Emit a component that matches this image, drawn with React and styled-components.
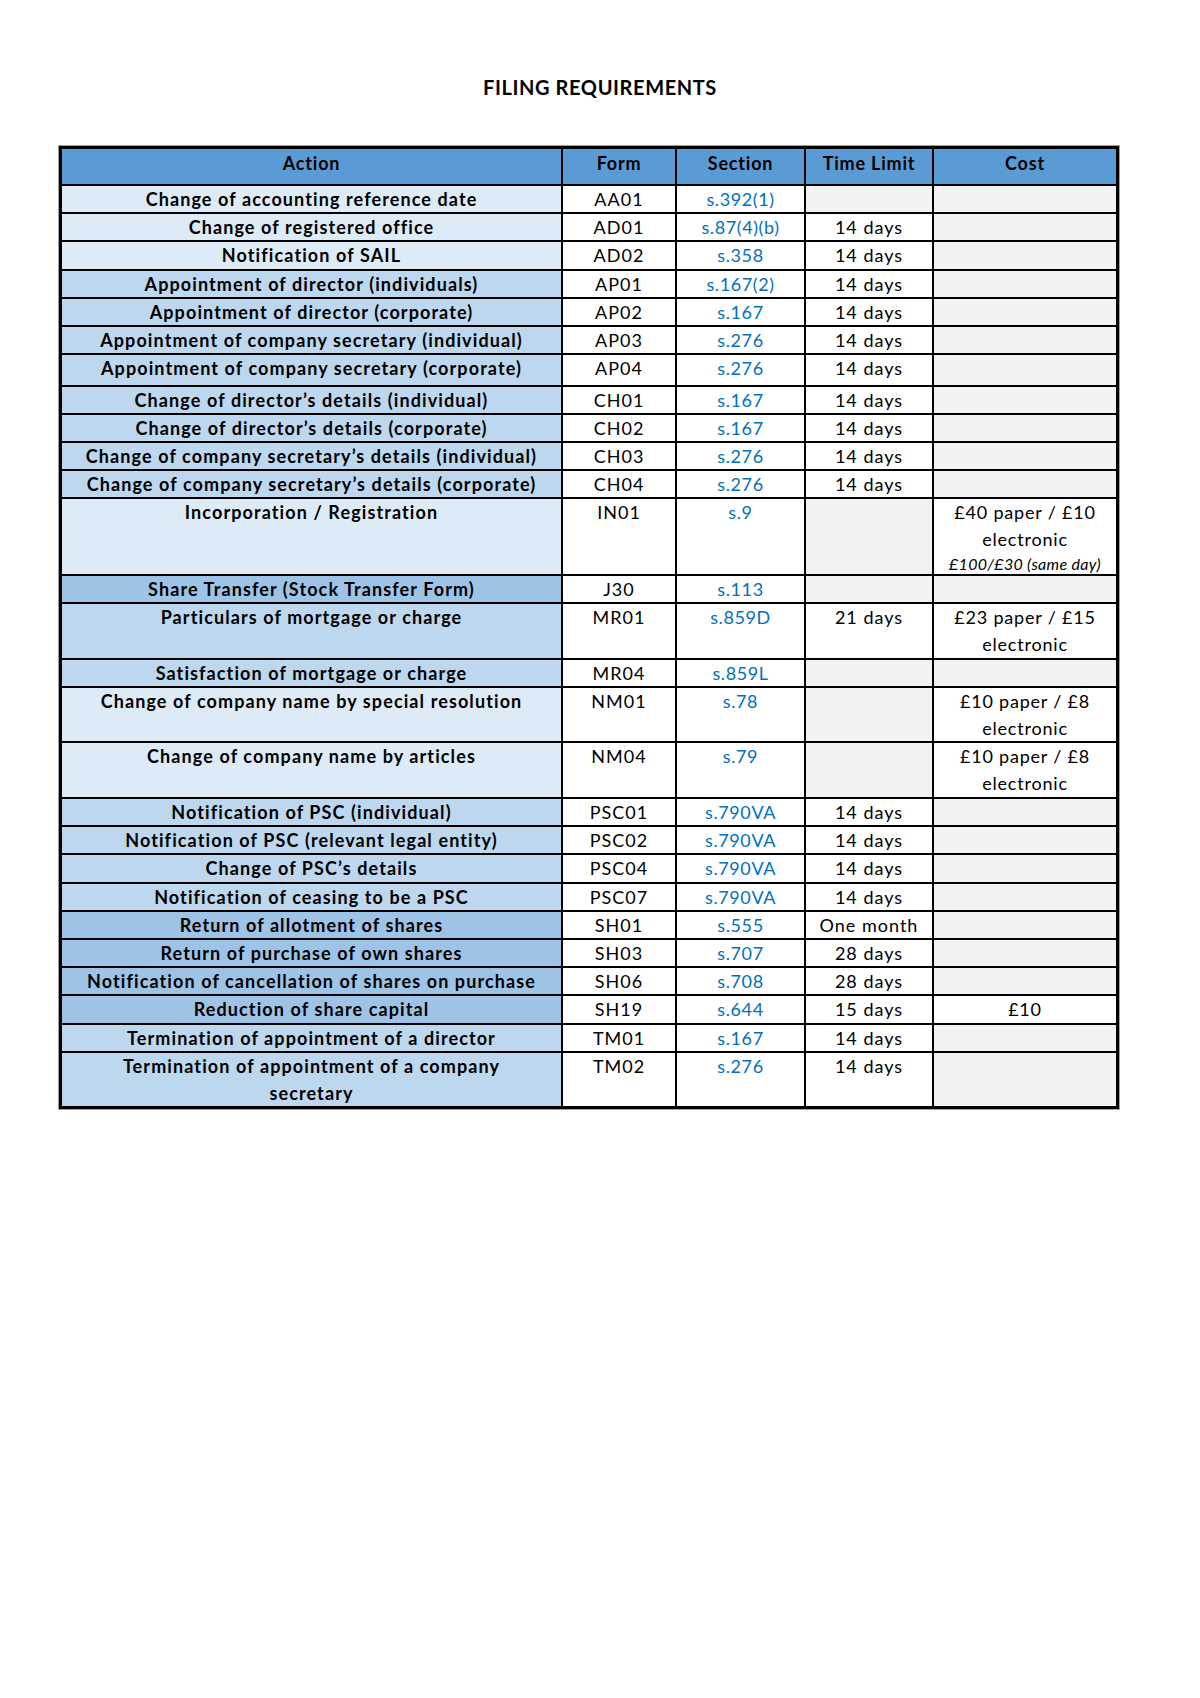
import React from "react";
import styled, { createGlobalStyle } from "styled-components";

const Global = createGlobalStyle`
  html, body {
    margin: 0;
    padding: 0;
    background: #ffffff;
  }
  body {
    font-family: Lato, "Open Sans", sans-serif;
    color: #000;
  }
`;

const Page = styled.div`
  width: 1200px;
  min-height: 1698px;
  padding-top: 75px;
  box-sizing: border-box;
`;

const Title = styled.h1`
  margin: 0 0 47px 0;
  text-align: center;
  font-size: 20px;
  line-height: 24px;
  font-weight: 700;
  letter-spacing: 0.6px;
`;

const Table = styled.div`
  margin-left: 59px;
  width: 1060px;
  box-sizing: border-box;
  display: flex;
  flex-direction: column;
  gap: 2px;
  padding: 3px;
  background: #000;
  outline: 1px solid #a0a0a0;
`;

const Row = styled.div`
  display: grid;
  grid-template-columns: 499px 112px 127px 126px 182px;
  gap: 2px;
  height: ${(p) => p.$h}px;
`;

const Cell = styled.div`
  background: ${(p) => p.$bg || "#ffffff"};
  text-align: center;
  font-size: 18px;
  line-height: 27px;
  font-weight: ${(p) => (p.$bold ? 700 : 400)};
  color: ${(p) => p.$color || "#000"};
  letter-spacing: ${(p) => p.$ls || "1px"};
  overflow: hidden;
  white-space: nowrap;
`;

const HeadCell = styled(Cell)`
  background: #5b9bd5;
  font-weight: 700;
  padding-top: 1px;
  letter-spacing: 0.8px;
`;

const Small = styled.span`
  display: block;
  font-size: 16px;
  line-height: 22px;
  font-style: italic;
  letter-spacing: 0.3px;
`;

const tones = {
  light: "#ddebf7",
  mid: "#bdd7ee",
  dark: "#9dc3e6",
};

const rows = [
  ["Change of accounting reference date", "AA01", "s.392(1)", "", "", "light", 26],
  ["Change of registered office", "AD01", "s.87(4)(b)", "14 days", "", "light", 26],
  ["Notification of SAIL", "AD02", "s.358", "14 days", "", "light", 27],
  ["Appointment of director (individuals)", "AP01", "s.167(2)", "14 days", "", "mid", 26],
  ["Appointment of director (corporate)", "AP02", "s.167", "14 days", "", "mid", 26],
  ["Appointment of company secretary (individual)", "AP03", "s.276", "14 days", "", "mid", 26],
  ["Appointment of company secretary (corporate)", "AP04", "s.276", "14 days", "", "mid", 30],
  ["Change of director’s details (individual)", "CH01", "s.167", "14 days", "", "mid", 26],
  ["Change of director’s details (corporate)", "CH02", "s.167", "14 days", "", "mid", 26],
  ["Change of company secretary’s details (individual)", "CH03", "s.276", "14 days", "", "mid", 26],
  ["Change of company secretary’s details (corporate)", "CH04", "s.276", "14 days", "", "mid", 26],
  ["Incorporation / Registration", "IN01", "s.9", "", "£40 paper / £10|electronic|*£100/£30 (same day)", "light", 75],
  ["Share Transfer (Stock Transfer Form)", "J30", "s.113", "", "", "dark", 26],
  ["Particulars of mortgage or charge", "MR01", "s.859D", "21 days", "£23 paper / £15|electronic", "mid", 54],
  ["Satisfaction of mortgage or charge", "MR04", "s.859L", "", "", "mid", 26],
  ["Change of company name by special resolution", "NM01", "s.78", "", "£10 paper / £8|electronic", "light", 53],
  ["Change of company name by articles", "NM04", "s.79", "", "£10 paper / £8|electronic", "light", 54],
  ["Notification of PSC (individual)", "PSC01", "s.790VA", "14 days", "", "mid", 26],
  ["Notification of PSC (relevant legal entity)", "PSC02", "s.790VA", "14 days", "", "mid", 26],
  ["Change of PSC’s details", "PSC04", "s.790VA", "14 days", "", "mid", 27],
  ["Notification of ceasing to be a PSC", "PSC07", "s.790VA", "14 days", "", "mid", 26],
  ["Return of allotment of shares", "SH01", "s.555", "One month", "", "dark", 26],
  ["Return of purchase of own shares", "SH03", "s.707", "28 days", "", "dark", 26],
  ["Notification of cancellation of shares on purchase", "SH06", "s.708", "28 days", "", "dark", 26],
  ["Reduction of share capital", "SH19", "s.644", "15 days", "£10", "dark", 27],
  ["Termination of appointment of a director", "TM01", "s.167", "14 days", "", "mid", 26],
  ["Termination of appointment of a company|secretary", "TM02", "s.276", "14 days", "", "mid", 53],
];

function Lines({ text }) {
  return text.split("|").map((line, i) =>
    line.startsWith("*") ? (
      <Small key={i}>{line.slice(1)}</Small>
    ) : (
      <div key={i}>{line}</div>
    )
  );
}

export default function App() {
  return (
    <Page>
      <Global />
      <Title>FILING REQUIREMENTS</Title>
      <Table>
        <Row $h={35}>
          <HeadCell>Action</HeadCell>
          <HeadCell>Form</HeadCell>
          <HeadCell>Section</HeadCell>
          <HeadCell>Time Limit</HeadCell>
          <HeadCell>Cost</HeadCell>
        </Row>
        {rows.map(([action, form, section, time, cost, tone, h]) => (
          <Row key={form} $h={h}>
            <Cell $bg={tones[tone]} $bold $ls="1.1px">
              <Lines text={action} />
            </Cell>
            <Cell>{form}</Cell>
            <Cell $color="#0070c0" $ls="0.6px">{section}</Cell>
            <Cell $bg={time ? "#ffffff" : "#f2f2f2"}>{time}</Cell>
            <Cell $bg={cost ? "#ffffff" : "#f2f2f2"} $ls="0.8px">
              {cost && <Lines text={cost} />}
            </Cell>
          </Row>
        ))}
      </Table>
    </Page>
  );
}
